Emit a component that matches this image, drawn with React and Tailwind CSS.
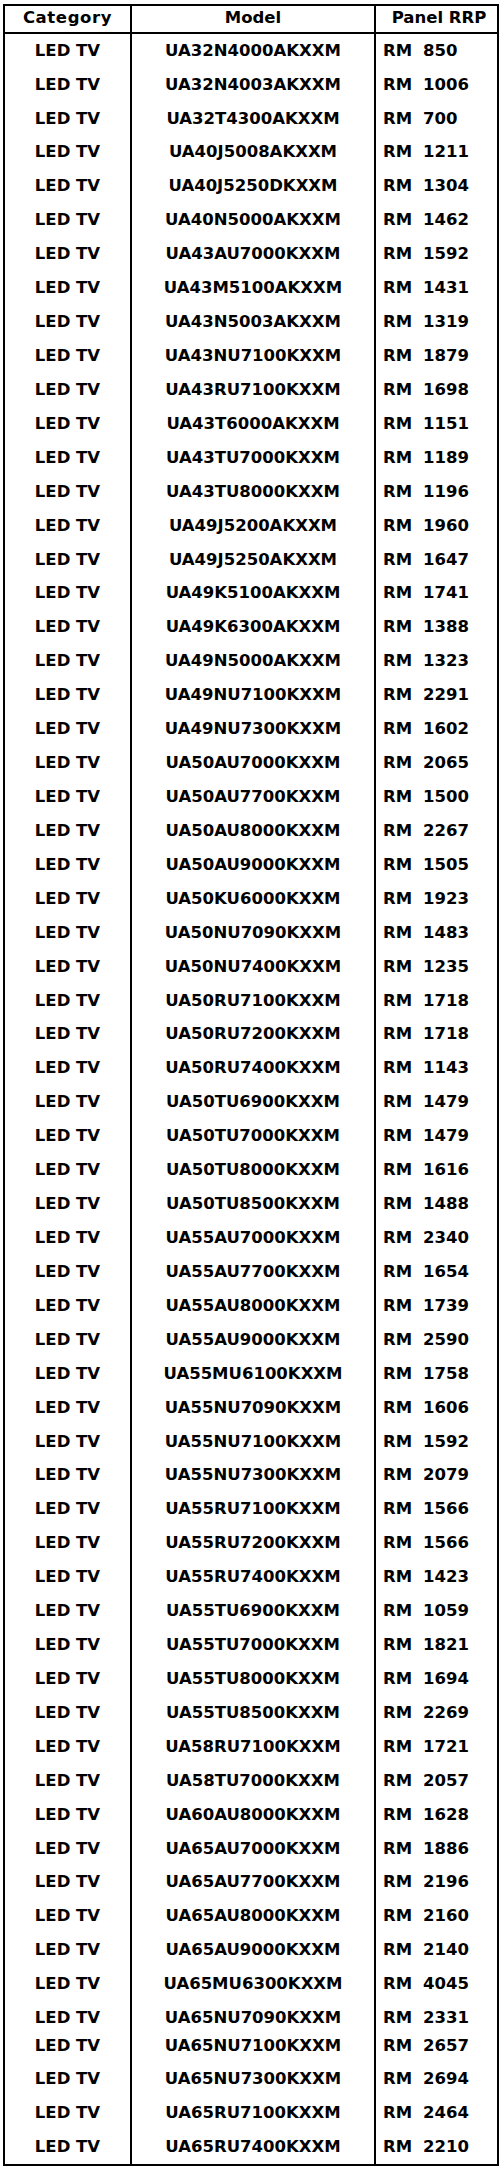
import React from "react";

const rows = [
  ["UA32N4000AKXXM", "850"],
  ["UA32N4003AKXXM", "1006"],
  ["UA32T4300AKXXM", "700"],
  ["UA40J5008AKXXM", "1211"],
  ["UA40J5250DKXXM", "1304"],
  ["UA40N5000AKXXM", "1462"],
  ["UA43AU7000KXXM", "1592"],
  ["UA43M5100AKXXM", "1431"],
  ["UA43N5003AKXXM", "1319"],
  ["UA43NU7100KXXM", "1879"],
  ["UA43RU7100KXXM", "1698"],
  ["UA43T6000AKXXM", "1151"],
  ["UA43TU7000KXXM", "1189"],
  ["UA43TU8000KXXM", "1196"],
  ["UA49J5200AKXXM", "1960"],
  ["UA49J5250AKXXM", "1647"],
  ["UA49K5100AKXXM", "1741"],
  ["UA49K6300AKXXM", "1388"],
  ["UA49N5000AKXXM", "1323"],
  ["UA49NU7100KXXM", "2291"],
  ["UA49NU7300KXXM", "1602"],
  ["UA50AU7000KXXM", "2065"],
  ["UA50AU7700KXXM", "1500"],
  ["UA50AU8000KXXM", "2267"],
  ["UA50AU9000KXXM", "1505"],
  ["UA50KU6000KXXM", "1923"],
  ["UA50NU7090KXXM", "1483"],
  ["UA50NU7400KXXM", "1235"],
  ["UA50RU7100KXXM", "1718"],
  ["UA50RU7200KXXM", "1718"],
  ["UA50RU7400KXXM", "1143"],
  ["UA50TU6900KXXM", "1479"],
  ["UA50TU7000KXXM", "1479"],
  ["UA50TU8000KXXM", "1616"],
  ["UA50TU8500KXXM", "1488"],
  ["UA55AU7000KXXM", "2340"],
  ["UA55AU7700KXXM", "1654"],
  ["UA55AU8000KXXM", "1739"],
  ["UA55AU9000KXXM", "2590"],
  ["UA55MU6100KXXM", "1758"],
  ["UA55NU7090KXXM", "1606"],
  ["UA55NU7100KXXM", "1592"],
  ["UA55NU7300KXXM", "2079"],
  ["UA55RU7100KXXM", "1566"],
  ["UA55RU7200KXXM", "1566"],
  ["UA55RU7400KXXM", "1423"],
  ["UA55TU6900KXXM", "1059"],
  ["UA55TU7000KXXM", "1821"],
  ["UA55TU8000KXXM", "1694"],
  ["UA55TU8500KXXM", "2269"],
  ["UA58RU7100KXXM", "1721"],
  ["UA58TU7000KXXM", "2057"],
  ["UA60AU8000KXXM", "1628"],
  ["UA65AU7000KXXM", "1886"],
  ["UA65AU7700KXXM", "2196"],
  ["UA65AU8000KXXM", "2160"],
  ["UA65AU9000KXXM", "2140"],
  ["UA65MU6300KXXM", "4045"],
  ["UA65NU7090KXXM", "2331"],
  ["UA65NU7100KXXM", "2657"],
  ["UA65NU7300KXXM", "2694"],
  ["UA65RU7100KXXM", "2464"],
  ["UA65RU7400KXXM", "2210"],
];

function rowHeight(i) {
  if (i === 59) return "h-[27px]";
  if (i === 60) return "h-[34px]";
  if (i === 61) return "h-[34.5px]";
  if (i === 62) return "h-[33px]";
  return "h-[33.93px]";
}

function Row({ model, price, i }) {
  const pad = i === 59 ? "pb-[5px]" : "";
  return (
    <div className={`flex ${rowHeight(i)}`}>
      <div className={`w-[127px] border-r-2 border-black flex items-center justify-center ${pad}`}>
        LED TV
      </div>
      <div className={`w-[244px] border-r-2 border-black flex items-center justify-center ${pad}`}>
        {model}
      </div>
      <div className={`flex-1 flex items-center pl-[7px] ${pad}`}>
        <span className="w-[40px]">RM</span>
        <span>{price}</span>
      </div>
    </div>
  );
}

export default function App() {
  return (
    <div className="bg-white min-h-[2171px] pt-[4px] pl-[3px]">
      <div
        className="w-[496px] border-2 border-black text-black font-bold text-[16.5px] leading-none"
        style={{ fontFamily: '"DejaVu Sans", "Liberation Sans", sans-serif' }}
      >
        <div className="flex h-[28px] border-b-2 border-black">
          <div className="w-[127px] border-r-2 border-black flex items-center justify-center pb-[2px] tracking-[0.6px]">
            Category
          </div>
          <div className="w-[244px] border-r-2 border-black flex items-center justify-center pb-[2px]">
            Model
          </div>
          <div className="flex-1 flex items-center justify-center pb-[2px] pl-[5px]">
            Panel RRP
          </div>
        </div>
        {rows.map(([m, p], i) => (
          <Row key={m} model={m} price={p} i={i} />
        ))}
      </div>
    </div>
  );
}
